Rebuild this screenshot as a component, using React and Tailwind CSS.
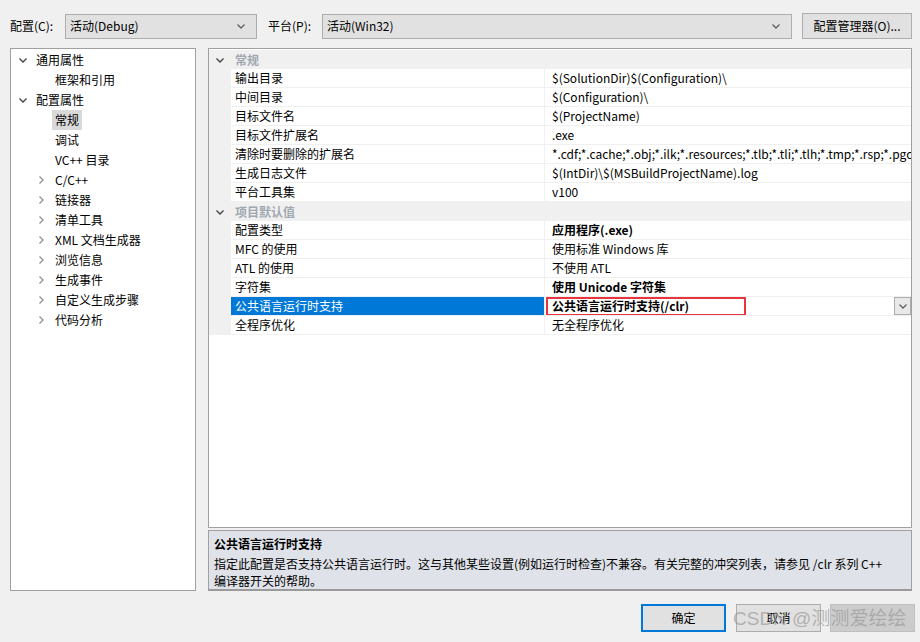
import React from 'react';

const FONT = { fontFamily: '"Segoe UI", "Noto Sans CJK SC", "Noto Sans", sans-serif' };

const Chevron = ({ dir = 'down', className = '' }) => (
  <svg width="10" height="10" viewBox="0 0 10 10" className={className}>
    {dir === 'down' ? (
      <path d="M1.5 3.5 L5 7 L8.5 3.5" fill="none" stroke="currentColor" strokeWidth="1.3" />
    ) : (
      <path d="M3.5 1.5 L7 5 L3.5 8.5" fill="none" stroke="currentColor" strokeWidth="1.3" />
    )}
  </svg>
);

const treeItems = [
  { label: '通用属性', level: 0, exp: 'down' },
  { label: '框架和引用', level: 1 },
  { label: '配置属性', level: 0, exp: 'down' },
  { label: '常规', level: 1, selected: true },
  { label: '调试', level: 1 },
  { label: 'VC++ 目录', level: 1 },
  { label: 'C/C++', level: 1, exp: 'right' },
  { label: '链接器', level: 1, exp: 'right' },
  { label: '清单工具', level: 1, exp: 'right' },
  { label: 'XML 文档生成器', level: 1, exp: 'right' },
  { label: '浏览信息', level: 1, exp: 'right' },
  { label: '生成事件', level: 1, exp: 'right' },
  { label: '自定义生成步骤', level: 1, exp: 'right' },
  { label: '代码分析', level: 1, exp: 'right' },
];

const sections = [
  {
    title: '常规',
    rows: [
      ['输出目录', '$(SolutionDir)$(Configuration)\\'],
      ['中间目录', '$(Configuration)\\'],
      ['目标文件名', '$(ProjectName)'],
      ['目标文件扩展名', '.exe'],
      ['清除时要删除的扩展名', '*.cdf;*.cache;*.obj;*.ilk;*.resources;*.tlb;*.tli;*.tlh;*.tmp;*.rsp;*.pgc;*.pgd;*.meta'],
      ['生成日志文件', '$(IntDir)\\$(MSBuildProjectName).log'],
      ['平台工具集', 'v100'],
    ],
  },
  {
    title: '项目默认值',
    rows: [
      ['配置类型', '应用程序(.exe)', 'bold'],
      ['MFC 的使用', '使用标准 Windows 库'],
      ['ATL 的使用', '不使用 ATL'],
      ['字符集', '使用 Unicode 字符集', 'bold'],
      ['公共语言运行时支持', '公共语言运行时支持(/clr)', 'selected'],
      ['全程序优化', '无全程序优化'],
    ],
  },
];

const Combo = ({ text, className }) => (
  <div className={`h-[25px] bg-[#e1e1e1] border border-[#adadad] flex items-center pl-[4px] pr-[10px] ${className}`}>
    <span className="flex-1">{text}</span>
    <Chevron className="text-[#606060]" />
  </div>
);

const PropRow = ({ name, value, kind }) => {
  const selected = kind === 'selected';
  return (
    <div className="flex h-[19px]">
      <div className="w-[22px] shrink-0 bg-[#f0f0f0]" />
      <div
        className={`w-[314px] shrink-0 pl-[4px] flex items-center border-b border-r border-[#f0f0f0] ${
          selected ? 'bg-[#0078d7] text-white' : 'bg-white'
        }`}
      >
        {name}
      </div>
      <div className="flex-1 min-w-0 bg-white border-b border-[#f0f0f0] flex items-center relative overflow-hidden">
        {selected && (
          <div className="absolute left-[1px] top-[0px] w-[200px] h-[19px] border-2 border-[#e8343c]" />
        )}
        <span
          className={`pl-[7px] whitespace-nowrap ${kind === 'bold' || selected ? 'font-bold' : ''}`}
        >
          {value}
        </span>
        {selected && (
          <div className="absolute right-[0px] top-[0px] w-[17px] h-[18px] bg-[#e8e8e8] border border-[#adadad] flex items-center justify-center text-[#606060]">
            <Chevron />
          </div>
        )}
      </div>
    </div>
  );
};

export default function App() {
  return (
    <div
      className="w-[920px] h-[642px] bg-[#f0f0f0] relative overflow-hidden text-[12px] text-black leading-none"
      style={FONT}
    >
      {/* top bar */}
      <div className="flex items-center pt-[13px] pl-[10px] h-[39px]">
        <span className="w-[55px]">配置(C):</span>
        <Combo text="活动(Debug)" className="w-[192px]" />
        <span className="ml-[11px] w-[54px]">平台(P):</span>
        <Combo text="活动(Win32)" className="w-[470px]" />
        <div className="ml-[10px] w-[110px] h-[26px] bg-[#e1e1e1] border border-[#adadad] flex items-center justify-center">
          配置管理器(O)...
        </div>
      </div>

      {/* main */}
      <div className="flex mt-[9px] pl-[10px] gap-[12px] h-[543px]">
        {/* tree */}
        <div className="w-[186px] bg-white border border-[#a0a0a0] pt-[1px]">
          {treeItems.map((t) => (
            <div key={t.label} className="h-[20px] flex items-center">
              {t.level === 0 ? (
                <>
                  <span className="w-[25px] flex justify-end pr-[8px] text-[#404040]">
                    <Chevron dir="down" />
                  </span>
                  <span>{t.label}</span>
                </>
              ) : (
                <>
                  <span className="w-[41px] flex justify-end pr-[6px] text-[#909090]">
                    {t.exp === 'right' && <Chevron dir="right" />}
                  </span>
                  <span className={`px-[3px] h-[20px] flex items-center ${t.selected ? 'bg-[#d9d9d9]' : ''}`}>
                    {t.label}
                  </span>
                </>
              )}
            </div>
          ))}
        </div>

        {/* right */}
        <div className="w-[704px] flex flex-col">
          <div className="h-[483px] bg-white border border-[#a0a0a0] pt-[1px] overflow-hidden">
            {sections.map((s) => (
              <div key={s.title}>
                <div className="h-[19px] bg-[#f0f0f0] flex items-center">
                  <span className="w-[22px] flex justify-center text-[#404040]">
                    <Chevron />
                  </span>
                  <span className="pl-[4px] text-[#a0a8b0] font-bold">{s.title}</span>
                </div>
                {s.rows.map((r) => (
                  <PropRow key={r[0]} name={r[0]} value={r[1]} kind={r[2]} />
                ))}
              </div>
            ))}
          </div>
          <div className="h-[61px] mt-[2px] bg-[#dfe2e8] border border-[#a0a0a0] border-b-2 border-b-[#9a9a9a] px-[5px] pt-[7px]">
            <div className="font-bold h-[17px]">公共语言运行时支持</div>
            <div className="leading-[17px]">
              指定此配置是否支持公共语言运行时。这与其他某些设置(例如运行时检查)不兼容。有关完整的冲突列表，请参见 /clr 系列 C++
              <br />
              编译器开关的帮助。
            </div>
          </div>
        </div>
      </div>

      {/* buttons */}
      <div className="flex justify-end pr-[5px] mt-[13px]">
        <div className="w-[85px] h-[28px] bg-[#e1e1e1] border-2 border-[#0078d7] flex items-center justify-center">
          确定
        </div>
        <div className="ml-[10px] w-[85px] h-[28px] bg-[#e1e1e1] border border-[#adadad] flex items-center justify-center">
          取消
        </div>
        <div className="ml-[9px] w-[85px] h-[28px] bg-[#cccccc] border border-[#bfbfbf]" />
      </div>

      {/* watermark */}
      <div
        className="absolute left-[733px] top-[609px] text-[19px] text-[#9a9a9a]/70 whitespace-nowrap pointer-events-none"
        style={{ fontFamily: '"Liberation Sans", "Noto Sans CJK SC", sans-serif' }}
      >
        CSDN @测测爱绘绘
      </div>
    </div>
  );
}
